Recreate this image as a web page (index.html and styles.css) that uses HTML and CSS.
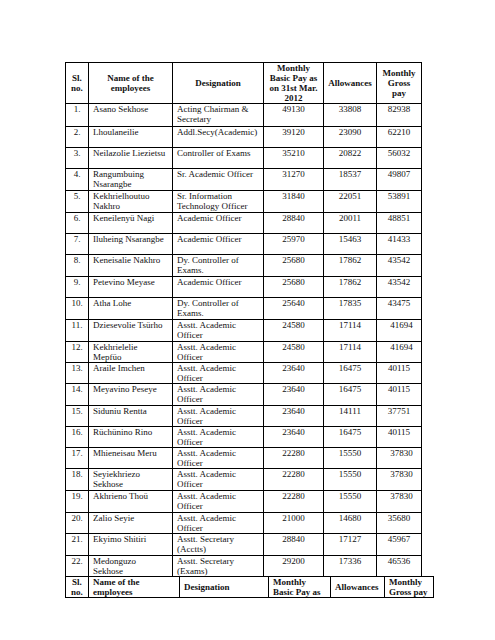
FILE: index.html
```html
<!DOCTYPE html>
<html>
<head>
<meta charset="utf-8">
<link rel="stylesheet" href="styles.css">
</head>
<body>
<div class="page">
<table class="pay">
<colgroup><col class="c1"><col class="c2"><col class="c3"><col class="c4"><col class="c5"><col class="c6"></colgroup>
<thead>
<tr class="hrow"><th>Sl.<br>no.</th><th>Name of the<br>employees</th><th>Designation</th><th>Monthly<br>Basic Pay as<br>on 31st Mar.<br>2012</th><th>Allowances</th><th>Monthly<br>Gross<br>pay</th></tr>
</thead>
<tbody>
<tr class="h23"><td class="n">1.</td><td>Asano Sekhose</td><td>Acting Chairman &amp;<br>Secretary</td><td class="v">49130</td><td class="v">33808</td><td class="v">82938</td></tr>
<tr class="h21"><td class="n">2.</td><td>Lhoulaneilie</td><td>Addl.Secy(Academic)</td><td class="v">39120</td><td class="v">23090</td><td class="v">62210</td></tr>
<tr class="h21"><td class="n">3.</td><td>Neilazolie Liezietsu</td><td>Controller of Exams</td><td class="v">35210</td><td class="v">20822</td><td class="v">56032</td></tr>
<tr class="h22"><td class="n">4.</td><td>Rangumbuing<br>Nsarangbe</td><td>Sr. Academic Officer</td><td class="v">31270</td><td class="v">18537</td><td class="v">49807</td></tr>
<tr class="h22"><td class="n">5.</td><td>Kekhrielhoutuo<br>Nakhro</td><td>Sr. Information<br>Technology Officer</td><td class="v">31840</td><td class="v">22051</td><td class="v">53891</td></tr>
<tr class="h21"><td class="n">6.</td><td>Keneilenyü Nagi</td><td>Academic Officer</td><td class="v">28840</td><td class="v">20011</td><td class="v">48851</td></tr>
<tr class="h21"><td class="n">7.</td><td>Iluheing Nsarangbe</td><td>Academic Officer</td><td class="v">25970</td><td class="v">15463</td><td class="v">41433</td></tr>
<tr class="h22"><td class="n">8.</td><td>Keneisalie Nakhro</td><td>Dy. Controller of<br>Exams.</td><td class="v">25680</td><td class="v">17862</td><td class="v">43542</td></tr>
<tr class="h21"><td class="n">9.</td><td>Petevino Meyase</td><td>Academic Officer</td><td class="v">25680</td><td class="v">17862</td><td class="v">43542</td></tr>
<tr class="h22"><td class="n">10.</td><td>Atha Lohe</td><td>Dy. Controller of<br>Exams.</td><td class="v">25640</td><td class="v">17835</td><td class="v">43475</td></tr>
<tr class="h22"><td class="n">11.</td><td>Dziesevolie Tsürho</td><td>Asstt. Academic<br>Officer</td><td class="v">24580</td><td class="v">17114</td><td class="v sh">41694</td></tr>
<tr class="h21"><td class="n">12.</td><td>Kekhrielelie<br>Mepfüo</td><td>Asstt. Academic<br>Officer</td><td class="v">24580</td><td class="v">17114</td><td class="v sh">41694</td></tr>
<tr class="h21"><td class="n">13.</td><td>Araile Imchen</td><td>Asstt. Academic<br>Officer</td><td class="v">23640</td><td class="v">16475</td><td class="v">40115</td></tr>
<tr class="h22"><td class="n">14.</td><td>Meyavino Peseye</td><td>Asstt. Academic<br>Officer</td><td class="v">23640</td><td class="v">16475</td><td class="v">40115</td></tr>
<tr class="h21"><td class="n">15.</td><td>Siduniu Rentta</td><td>Asstt. Academic<br>Officer</td><td class="v">23640</td><td class="v">14111</td><td class="v">37751</td></tr>
<tr class="h21"><td class="n">16.</td><td>Rüchünino Rino</td><td>Asstt. Academic<br>Officer</td><td class="v">23640</td><td class="v">16475</td><td class="v">40115</td></tr>
<tr class="h21"><td class="n">17.</td><td>Mhieneisau Meru</td><td>Asstt. Academic<br>Officer</td><td class="v">22280</td><td class="v">15550</td><td class="v sh">37830</td></tr>
<tr class="h22"><td class="n">18.</td><td>Seyiekhriezo<br>Sekhose</td><td>Asstt. Academic<br>Officer</td><td class="v">22280</td><td class="v">15550</td><td class="v sh">37830</td></tr>
<tr class="h22"><td class="n">19.</td><td>Akhrieno Thoü</td><td>Asstt. Academic<br>Officer</td><td class="v">22280</td><td class="v">15550</td><td class="v sh">37830</td></tr>
<tr class="h21"><td class="n">20.</td><td>Zalio Seyie</td><td>Asstt. Academic<br>Officer</td><td class="v">21000</td><td class="v">14680</td><td class="v">35680</td></tr>
<tr class="h22"><td class="n">21.</td><td>Ekyimo Shitiri</td><td>Asstt. Secretary<br>(Acctts)</td><td class="v">28840</td><td class="v">17127</td><td class="v">45967</td></tr>
<tr class="h21"><td class="n">22.</td><td>Medonguzo<br>Sekhose</td><td>Asstt. Secretary<br>(Exams)</td><td class="v">29200</td><td class="v">17336</td><td class="v">46536</td></tr>
</tbody>
</table>
<table class="pay2">
<colgroup><col class="d1"><col class="d2"><col class="d3"><col class="d4"><col class="d5"><col class="d6"></colgroup>
<tr><th class="ctr">Sl.<br>no.</th><th>Name of the<br>employees</th><th>Designation</th><th>Monthly<br>Basic Pay as</th><th>Allowances</th><th>Monthly<br>Gross pay</th></tr>
</table>
</div>
</body>
</html>
```

FILE: styles.css
```css
html, body {
  margin: 0;
  padding: 0;
  background: #fff;
}
.page {
  padding: 62px 0 0 65px;
  font-family: "Liberation Serif", "Times New Roman", serif;
  font-size: 9px;
  line-height: 9.5px;
  color: #111;
}
table {
  border-collapse: collapse;
  table-layout: fixed;
}
.pay {
  width: 357px;
}
.c1 { width: 23px; }
.c2 { width: 84px; }
.c3 { width: 91px; }
.c4 { width: 60px; }
.c5 { width: 53px; }
.c6 { width: 45px; }
td, th {
  border: 1px solid #000;
  white-space: nowrap;
  overflow: hidden;
}
th {
  font-weight: bold;
  text-align: center;
  vertical-align: middle;
  padding: 0;
  line-height: 10px;
}
.hrow { height: 41px; }
td {
  vertical-align: top;
  text-align: left;
  padding: 1px 2px 0 4px;
}
td.n { text-align: center; padding: 1px 0 0 0; }
td.v { text-align: center; padding: 1px 0 0 0; }
td.v.sh { padding-left: 5px; }
.h21 { height: 21px; }
.h22 { height: 22px; }
.h23 { height: 23px; }
.pay2 {
  width: 368px;
  margin-top: -1px;
}
.d1 { width: 23px; }
.d2 { width: 91px; }
.d3 { width: 89px; }
.d4 { width: 62px; }
.d5 { width: 54px; }
.d6 { width: 49px; }
.pay2 tr { height: 21px; }
.pay2 th {
  text-align: left;
  padding: 0 2px 0 4px;
  line-height: 10px;
}
.pay2 th.ctr { text-align: center; padding: 0; }
```
